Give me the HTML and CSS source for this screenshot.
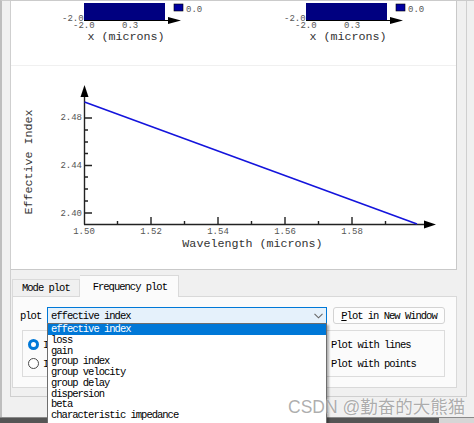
FILE: index.html
```html
<!DOCTYPE html>
<html lang="en">
<head>
<meta charset="utf-8">
<link rel="stylesheet" href="styles.css">
</head>
<body>

<div class="window">
  <div class="frame">

    <div class="canvas">
      <svg class="plots" width="445" height="268" viewBox="11 1 445 268">
        <!-- mode profile, left -->
        <g class="mini">
          <rect x="84" y="3" width="81" height="17" fill="#000080"/>
          <line x1="84" y1="20.5" x2="170" y2="20.5" stroke="#000" stroke-width="1.2"/>
          <polygon points="168,17 181,20.5 168,24" fill="#000"/>
          <rect x="174" y="4" width="9" height="7" fill="#0000a0" stroke="#000" stroke-width="0.6"/>
          <text class="tick" x="186" y="12">0.0</text>
          <text class="tick" x="62" y="20.5">-2.0</text>
          <text class="tick" x="73" y="27.5">-2.0</text>
          <text class="tick" x="122" y="27.5">0.3</text>
          <text class="axis-label" x="126" y="40" text-anchor="middle">x (microns)</text>
        </g>
        <!-- mode profile, right -->
        <g class="mini" transform="translate(222,0)">
          <rect x="84" y="3" width="81" height="17" fill="#000080"/>
          <line x1="84" y1="20.5" x2="170" y2="20.5" stroke="#000" stroke-width="1.2"/>
          <polygon points="168,17 181,20.5 168,24" fill="#000"/>
          <rect x="174" y="4" width="9" height="7" fill="#0000a0" stroke="#000" stroke-width="0.6"/>
          <text class="tick" x="186" y="12">0.0</text>
          <text class="tick" x="62" y="20.5">-2.0</text>
          <text class="tick" x="73" y="27.5">-2.0</text>
          <text class="tick" x="122" y="27.5">0.3</text>
          <text class="axis-label" x="126" y="40" text-anchor="middle">x (microns)</text>
        </g>
        <line x1="11" y1="65.5" x2="456" y2="65.5" stroke="#f0f0f0"/>

        <!-- effective index vs wavelength -->
        <g stroke="#222" stroke-width="1.4" fill="none">
          <line x1="84.5" y1="96" x2="84.5" y2="224.5"/>
          <line x1="84" y1="224.5" x2="425" y2="224.5"/>
          <path d="M84 118h8M84 165.5h8M84 213h8"/>
          <path d="M84 130h4M84 142h4M84 153.5h4M84 177h4M84 189h4M84 201h4"/>
          <path d="M151 224v-7M218 224v-7M285 224v-7M352 224v-7"/>
          <path d="M117.5 224v-3M184.5 224v-3M251.5 224v-3M318.5 224v-3M385.5 224v-3"/>
        </g>
        <polygon points="80.5,97 84.5,85 88.5,97" fill="#000"/>
        <polygon points="424,220.5 436,224.5 424,228.5" fill="#000"/>

        <g class="tick" text-anchor="end">
          <text x="82" y="120">2.48</text>
          <text x="82" y="168">2.44</text>
          <text x="82" y="215.5">2.40</text>
        </g>
        <g class="tick" text-anchor="middle">
          <text x="84" y="233.5">1.50</text>
          <text x="151" y="233.5">1.52</text>
          <text x="218" y="233.5">1.54</text>
          <text x="285" y="233.5">1.56</text>
          <text x="352" y="233.5">1.58</text>
        </g>

        <line x1="84.5" y1="102" x2="417" y2="224" stroke="#1414dc" stroke-width="1.6"/>

        <text class="axis-label" x="252.5" y="246.5" text-anchor="middle">Wavelength (microns)</text>
        <text class="axis-label" transform="translate(32,162) rotate(-90)" text-anchor="middle">Effective Index</text>
      </svg>
    </div>

    <div class="tabs">
      <div class="tab">Mode plot</div>
      <div class="tab current">Frequency plot</div>
    </div>

    <div class="pane">
      <div class="row">
        <span class="label">plot</span>
        <div class="combo">
          <span>effective index</span>
          <svg class="chevron" width="9" height="6" viewBox="0 0 9 6">
            <polyline points="0.5,0.8 4.5,4.8 8.5,0.8" fill="none" stroke="#666" stroke-width="1.1"/>
          </svg>
        </div>
        <button class="btn"><u>P</u>lot in New Window</button>
      </div>

      <div class="row groups">
        <div class="group scale">
          <label class="opt"><span class="radio on"></span>I</label>
          <label class="opt"><span class="radio"></span>I</label>
        </div>
        <div class="group style">
          <label class="opt"><span class="radio on"></span>Plot with lines</label>
          <label class="opt"><span class="radio"></span>Plot with points</label>
        </div>
      </div>
    </div>

  </div>
</div>
<div class="taskbar"></div>

<ul class="dropdown">
  <li class="selected">effective index</li>
  <li>loss</li>
  <li>gain</li>
  <li>group index</li>
  <li>group velocity</li>
  <li>group delay</li>
  <li>dispersion</li>
  <li>beta</li>
  <li>characteristic impedance</li>
</ul>

<div class="watermark">CSDN @勤奋的大熊猫</div>

</body>
</html>
```

FILE: styles.css
```css
body {
    margin: 0;
    width: 474px;
    height: 423px;
    overflow: hidden;
    position: relative;
    display: flex;
    flex-direction: column;
    background-color: #f0f0f0;
    font-family: "Liberation Mono", "Courier New", monospace;
    font-size: 10.5px;
    letter-spacing: -1px;
    color: #000000;
}
.window {
    flex: 1;
    border-left: 2px solid #bdbdbd;
    border-top: 1px solid #cbcbcb;
}
.frame {
    box-sizing: border-box;
    margin-left: 8px;
    width: 457px;
    height: 396px;
    padding-right: 9px;
    border: 1px solid #cfcfcf;
    border-top: none;
}

/* plot area */
.canvas {
    box-sizing: border-box;
    width: 446px;
    height: 269px;
    background-color: #ffffff;
    border-right: 1px solid #c9c9c9;
    border-bottom: 1px solid #c9c9c9;
}
.plots {
    display: block;
    letter-spacing: 0;
}
.plots .tick {
    font-family: "Liberation Mono", monospace;
    font-size: 9px;
    fill: #555555;
}
.plots .axis-label {
    font-family: "Liberation Mono", monospace;
    font-size: 11.7px;
    fill: #333333;
}

/* tabs */
.tabs {
    display: flex;
    align-items: flex-end;
    height: 21px;
    margin-top: 5px;
    padding-left: 1px;
}
.tab {
    box-sizing: border-box;
    height: 17px;
    line-height: 16px;
    padding: 0 9px;
    background-color: #f0f0f0;
    border: 1px solid #dadada;
    border-bottom: none;
}
.tab.current {
    height: 22px;
    line-height: 22px;
    padding: 0 11px 0 13px;
    margin-bottom: -1px;
    background-color: #fbfbfb;
    border-left: none;
    position: relative;
}
.pane {
    box-sizing: border-box;
    margin-left: 1px;
    width: 445px;
    height: 92px;
    padding: 10px 11px 0 7px;
    background-color: #fbfbfb;
    border: 1px solid #d9d9d9;
}
.row {
    display: flex;
    align-items: center;
    height: 17px;
}
.label {
    width: 27px;
}
.combo {
    box-sizing: border-box;
    display: flex;
    align-items: center;
    width: 280px;
    height: 17px;
    padding: 0 3px;
    background-color: #e5f1fb;
    border: 1px solid #0078d7;
}
.chevron {
    margin-left: auto;
}
.btn {
    box-sizing: border-box;
    margin-left: auto;
    width: 112px;
    height: 17px;
    padding: 0;
    font: inherit;
    letter-spacing: inherit;
    color: #000000;
    background-color: #fdfdfd;
    border: 1px solid #d3d3d3;
    border-radius: 3px;
}
.groups {
    height: 47px;
    margin-top: 6px;
    align-items: stretch;
}
.group {
    box-sizing: border-box;
    display: flex;
    flex-direction: column;
    gap: 6px;
    padding: 7px 0 0 5px;
    border: 1px solid #dcdcdc;
}
.group.scale {
    margin-left: 2px;
    width: 170px;
}
.group.style {
    margin-left: auto;
    width: 137px;
}
.opt {
    display: flex;
    align-items: center;
    gap: 4px;
    height: 13px;
}
.group.style .opt {
    gap: 6px;
}
.radio {
    box-sizing: border-box;
    width: 11px;
    height: 11px;
    border-radius: 50%;
    border: 1px solid #4a4a4a;
    background-color: #ffffff;
}
.radio.on {
    border: 3.5px solid #0078d7;
}

.taskbar {
    height: 5px;
    background: linear-gradient(to right, #555555 0 439px, #d6d6d6 439px);
    border-top: 1px solid #8a8a8a;
}

/* open list of the combo box */
.dropdown {
    position: absolute;
    left: 47px;
    top: 323px;
    box-sizing: border-box;
    width: 280px;
    height: 110px;
    margin: 0;
    padding: 0;
    list-style: none;
    background-color: #ffffff;
    border: 1px solid #6e6e6e;
    box-shadow: 2px 2px 2px rgba(0, 0, 0, 0.3);
}
.dropdown li {
    height: 10.75px;
    line-height: 10.75px;
    padding-left: 3px;
}
.dropdown li.selected {
    background-color: #0078d7;
    color: #ffffff;
}

.watermark {
    position: absolute;
    left: 288px;
    top: 393px;
    font-family: "Liberation Sans", "Noto Sans CJK SC", sans-serif;
    font-size: 17.5px;
    letter-spacing: 0;
    color: rgba(120, 120, 120, 0.6);
    text-shadow: 0 0 2px #ffffff;
}
```
